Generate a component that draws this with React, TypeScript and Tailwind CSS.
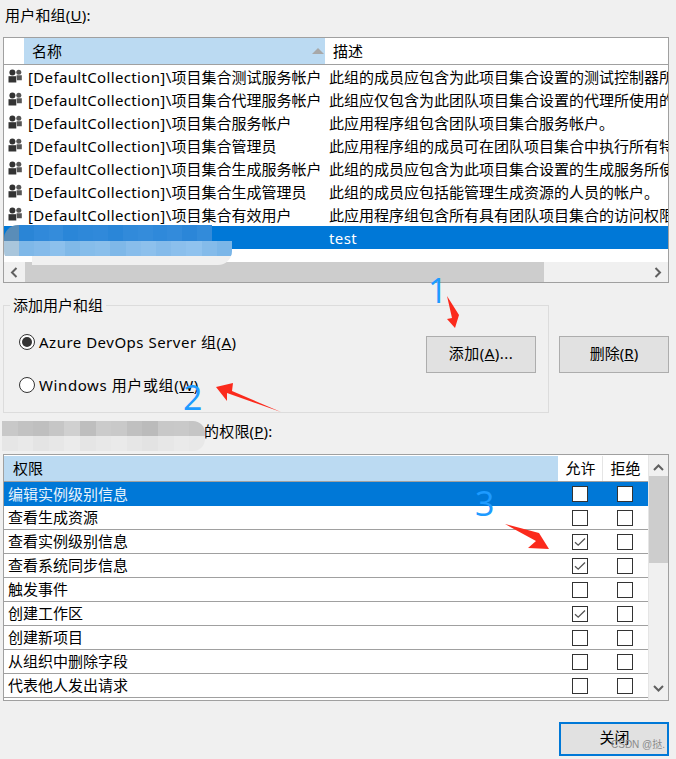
import React from "react";

const users: [string, string][] = [
  ["项目集合测试服务帐户", "此组的成员应包含为此项目集合设置的测试控制器所使用的服务帐户。"],
  ["项目集合代理服务帐户", "此组应仅包含为此团队项目集合设置的代理所使用的服务帐户。"],
  ["项目集合服务帐户", "此应用程序组包含团队项目集合服务帐户。"],
  ["项目集合管理员", "此应用程序组的成员可在团队项目集合中执行所有特权操作。"],
  ["项目集合生成服务帐户", "此组的成员应包含为此项目集合设置的生成服务所使用的帐户。"],
  ["项目集合生成管理员", "此组的成员应包括能管理生成资源的人员的帐户。"],
  ["项目集合有效用户", "此应用程序组包含所有具有团队项目集合的访问权限的用户。"],
];

const perms: [string, boolean][] = [
  ["查看生成资源", false],
  ["查看实例级别信息", true],
  ["查看系统同步信息", true],
  ["触发事件", false],
  ["创建工作区", true],
  ["创建新项目", false],
  ["从组织中删除字段", false],
  ["代表他人发出请求", false],
];

function GroupIcon() {
  return (
    <svg width="14" height="14" viewBox="0 0 14 14" className="ml-[4px] mr-[6px] shrink-0 -mt-[3px]">
      <circle cx="4.4" cy="3.4" r="3" fill="#333333" />
      <circle cx="10.8" cy="3.2" r="2.5" fill="#555555" />
      <path d="M8.6 6.2h5.2v5H9z" fill="#555555" />
      <path d="M0.5 7.2h7.8v6.3H0.5z" fill="#333333" />
    </svg>
  );
}

function Check({ checked = false }: { checked?: boolean }) {
  return (
    <div className="w-[16px] h-[16px] border-[1.5px] border-[#333333] bg-white flex items-center justify-center">
      {checked && (
        <svg width="12" height="10" viewBox="0 0 12 10">
          <path d="M1 5.2 L4.2 8.2 L11 1.5" fill="none" stroke="#555555" strokeWidth="1.3" />
        </svg>
      )}
    </div>
  );
}

function Chevron({ dir }: { dir: "up" | "down" | "left" | "right" }) {
  const d = {
    up: "M2 8 L6.5 3.5 L11 8",
    down: "M2 4 L6.5 8.5 L11 4",
    left: "M8.5 2 L4 6.5 L8.5 11",
    right: "M4.5 2 L9 6.5 L4.5 11",
  }[dir];
  return (
    <svg width="13" height="13" viewBox="0 0 13 13">
      <path d={d} fill="none" stroke="#606060" strokeWidth="2" />
    </svg>
  );
}

const topShades = ["#5a8db8", "#2a85d6", "#3089da", "#348cdb", "#2a86d8", "#2e88d9", "#3089da", "#2a86d8", "#318ada", "#348cdb", "#2f89da", "#338bdb", "#2b86d8", "#328bda"];
const midShades = ["#a9c6dc", "#7fb8e8", "#85bbea", "#8cc0ec", "#80b9e8", "#86bdea", "#8abfeb", "#7fb8e8", "#88bdeb", "#8dc0ec", "#85bbea", "#8bbfec", "#8fc2ee", "#84bbea", "#7bb6e8"];
const grayShades = ["#c8c8c8", "#c2c2c2", "#bfbfbf", "#c6c6c6", "#d0d0d0", "#bebebe", "#cbcbcb", "#c9c9c9", "#c0c0c0", "#bbbbbb", "#c8c8c8", "#c9c9c9", "#c5c5c5"];
const lowShades = ["#e6e6e6", "#e9e9e9", "#e4e4e4", "#e7e7e7", "#ebebeb", "#e5e5e5", "#e8e8e8", "#eaeaea", "#e6e6e6", "#e3e3e3", "#e7e7e7", "#eaeaea", "#e8e8e8"];

export default function App() {
  return (
    <div className="relative w-[676px] h-[759px] bg-[#f0f0f0] overflow-hidden text-[15px] text-black font-['Noto_Sans','Noto_Sans_CJK_SC',sans-serif]">
      <div className="flex flex-col pl-[3px] pr-[7px]">
        <div className="h-[37px] pl-[2px] pt-[3px] leading-[24px] tracking-[0.2px]">
          用户和组(<u>U</u>):
        </div>

        {/* Users list */}
        <div className="h-[246px] border border-[#a0a0a0] bg-white flex flex-col overflow-hidden">
          <div className="h-[27px] shrink-0 flex border-b border-[#a0a0a0]">
            <div className="w-[20px]" />
            <div className="w-[301px] bg-[#bbdaf2] pl-[8px] flex items-center justify-between pr-[1px]">
              <span>名称</span>
              <svg width="12" height="7" viewBox="0 0 12 7">
                <path d="M6 0 L12 6 H0z" fill="#a8a8a8" />
              </svg>
            </div>
            <div className="pl-[8px] flex items-center">描述</div>
          </div>
          <div className="flex-1 flex flex-col overflow-hidden">
            {users.map(([n, d]) => (
              <div key={n} className="h-[23px] shrink-0 flex items-center whitespace-nowrap overflow-hidden pt-[2px]">
                <GroupIcon />
                <div className="w-[301px] shrink-0 overflow-hidden">
                  <span className="tracking-[0.35px]">[DefaultCollection]\</span>
                  {n}
                </div>
                <div>{d}</div>
              </div>
            ))}
            <div className="h-[23px] shrink-0 bg-[#0078d7] text-white flex items-center pt-[2px]">
              <div className="w-[325px] shrink-0" />
              <div className="tracking-[0.4px]">test</div>
            </div>
          </div>
          <div className="h-[20px] shrink-0 bg-[#f0f0f0] flex items-center">
            <div className="w-[21px] flex justify-center"><Chevron dir="left" /></div>
            <div className="w-[519px] h-full bg-[#cdcdcd]" />
            <div className="flex-1 flex justify-end pr-[4px]"><Chevron dir="right" /></div>
          </div>
        </div>

        {/* Add group */}
        <div className="mt-[22px] flex items-start">
          <div className="relative w-[546px] h-[108px] border border-[#dcdcdc] flex justify-between pl-[15px] pr-[12px]">
            <div className="absolute left-[6px] top-[-11px] px-[3px] bg-[#f0f0f0] leading-[20px]">添加用户和组</div>
            <div className="flex flex-col pt-[25px] gap-[21px]">
              <label className="flex items-center h-[22px] tracking-[0.5px]">
                <span className="w-[16px] h-[16px] rounded-full border border-[#333333] bg-white flex items-center justify-center mr-[4px]">
                  <span className="w-[10px] h-[10px] rounded-full bg-[#333333]" />
                </span>
                <span>Azure DevOps Server 组(<u>A</u>)</span>
              </label>
              <label className="flex items-center h-[22px] tracking-[0.6px]">
                <span className="w-[16px] h-[16px] rounded-full border border-[#333333] bg-white mr-[4px]" />
                <span>Windows 用户或组(<u>W</u>)</span>
              </label>
            </div>
            <button className="mt-[30px] w-[110px] h-[37px] pb-[2px] bg-[#e1e1e1] border-[1.5px] border-[#adadad] tracking-[0.5px]">
              添加(<u>A</u>)...
            </button>
          </div>
          <button className="ml-[10px] mt-[31px] w-[110px] h-[37px] pb-[2px] bg-[#e1e1e1] border-[1.5px] border-[#adadad]">
            删除(<u>R</u>)
          </button>
        </div>

        <div className="h-[41px] pt-[7px] pl-[201px] leading-[22px] tracking-[0.2px]">
          的权限(<u>P</u>):
        </div>

        {/* Permissions table */}
        <div className="h-[247px] border border-[#a0a0a0] bg-white flex overflow-hidden">
          <div className="w-[644px] shrink-0 flex flex-col">
            <div className="h-[27px] shrink-0 pt-[1px] flex border-b border-[#a0a0a0]">
              <div className="w-[554px] bg-[#bbdaf2] pl-[9px] flex items-center">权限</div>
              <div className="w-[45px] flex items-center justify-center border-r border-[#e5e5e5] pl-[1px]">允许</div>
              <div className="w-[45px] flex items-center justify-center">拒绝</div>
            </div>
            <div className="h-[24px] shrink-0 flex items-center bg-[#0078d7] text-[#e8f3fb]">
              <div className="w-[553px] pl-[4px]">编辑实例级别信息</div>
              <div className="w-[45px] flex justify-center"><Check /></div>
              <div className="w-[45px] flex justify-center"><Check /></div>
            </div>
            {perms.map(([p, c]) => (
              <div key={p} className="h-[24px] shrink-0 flex items-center border-b border-[#a0a0a0]">
                <div className="w-[553px] pl-[4px]">{p}</div>
                <div className="w-[45px] flex justify-center"><Check checked={c} /></div>
                <div className="w-[45px] flex justify-center"><Check /></div>
              </div>
            ))}
          </div>
          <div className="flex-1 bg-[#f0f0f0] flex flex-col border-l border-[#e5e5e5]">
            <div className="h-[20px] flex items-end justify-center"><Chevron dir="up" /></div>
            <div className="h-[87px] mt-[1px] bg-[#cdcdcd]" />
            <div className="flex-1 flex items-end justify-center pb-[5px]"><Chevron dir="down" /></div>
          </div>
        </div>

        <div className="flex justify-end mt-[21px]">
          <button className="w-[110px] h-[34px] pb-[3px] pl-[1px] bg-[#e1e1e1] border-2 border-[#0078d7]">关闭</button>
        </div>
      </div>

      {/* Mosaic redactions */}
      <div className="absolute left-[4px] top-[225px] w-[228px] h-[40px] rounded-[14px] overflow-hidden flex flex-col">
        <div className="h-[16px] w-[208px] flex">
          {topShades.map((c, i) => <div key={i} className="flex-1" style={{ backgroundColor: c }} />)}
        </div>
        <div className="h-[15px] flex">
          {midShades.map((c, i) => <div key={i} className="flex-1" style={{ backgroundColor: c }} />)}
        </div>
        <div className="h-[9px] bg-[#f0f0f0] ml-[28px]" />
      </div>
      <div className="absolute left-[2px] top-[421px] w-[203px] h-[30px] rounded-r-[12px] overflow-hidden flex flex-col">
        <div className="h-[15px] flex">
          {grayShades.map((c, i) => <div key={i} className="flex-1" style={{ backgroundColor: c }} />)}
        </div>
        <div className="h-[15px] flex">
          {lowShades.map((c, i) => <div key={i} className="flex-1" style={{ backgroundColor: c }} />)}
        </div>
      </div>

      {/* Annotations */}
      <div className="absolute left-[428px] top-[270px] text-[34px] leading-[40px] text-[#1e9bff] font-['Open_Sans',sans-serif] font-normal">1</div>
      <div className="absolute left-[183px] top-[377px] text-[34px] leading-[40px] text-[#1e9bff] font-['Open_Sans',sans-serif] font-normal">2</div>
      <div className="absolute left-[475px] top-[483px] text-[34px] leading-[40px] text-[#1e9bff] font-['Open_Sans',sans-serif] font-normal">3</div>
      <svg className="absolute left-0 top-0 pointer-events-none" width="676" height="759" viewBox="0 0 676 759">
        <polygon points="447,296 459,315 455,328 447,319 452,318" fill="#fb2a1c" />
        <polygon points="216,387 233,383 232,391 281,412 227,393 227,401" fill="#fb2a1c" />
        <polygon points="505,524 539,533 549,549 528,548 536,541" fill="#fb2a1c" />
      </svg>
      <div className="absolute left-[611px] top-[737px] text-[10px] leading-[15px] text-[#8a8a8a] font-['Liberation_Sans','Noto_Sans_CJK_SC',sans-serif]">CSDN @挞.</div>
    </div>
  );
}
